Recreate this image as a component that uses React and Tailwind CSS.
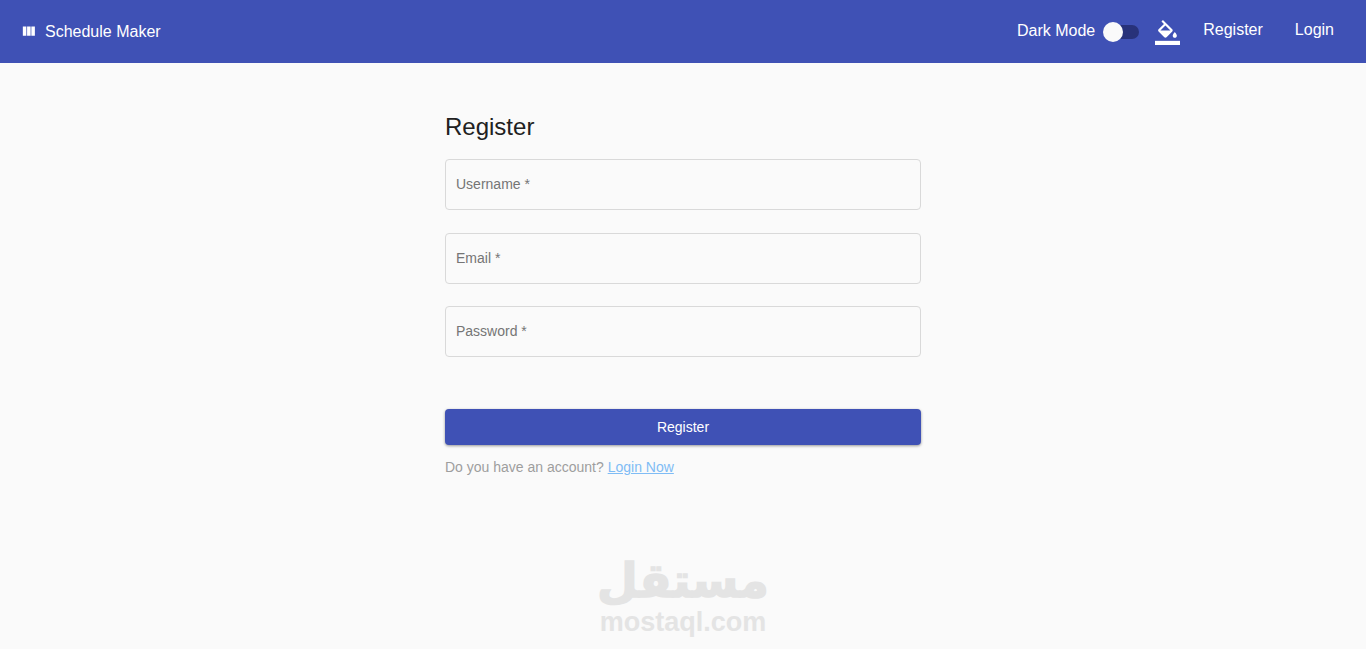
function Field({ label }) {
  return (
    <label className="flex h-[51px] w-full items-center rounded-[4px] border border-[#d9d9d9] px-[10px] text-[14px] text-[#757575]">
      {label} *
    </label>
  );
}

export default function App() {
  return (
    <div className="relative h-[649px] overflow-hidden bg-[#fafafa] font-['Liberation_Sans',Arial,sans-serif]">
      <header className="flex h-[63px] items-center justify-between bg-[#3f51b5] pl-[19px] pr-[32px] text-[16px] text-white">
        <div className="flex items-center gap-[8px]">
          <svg width="17" height="17" viewBox="0 0 24 24" fill="currentColor" className="ml-[1px]">
            <path d="M10 18h5V5h-5v13zm-6 0h5V5H4v13zM16 5v13h5V5h-5z" />
          </svg>
          <span>Schedule Maker</span>
        </div>
        <div className="flex items-center">
          <span className="mb-[2px] mr-[10px]">Dark Mode</span>
          <div className="relative mr-[16px] h-[14px] w-[34px] rounded-full bg-[#28327a]">
            <span className="absolute left-[-2px] top-[-3px] size-[20px] rounded-full bg-[#fafafa]" />
          </div>
          <svg width="25" height="25" viewBox="0 0 24 24" fill="currentColor" className="mr-[23px] mt-[2px]">
            <path d="M16.56 8.94L7.62 0 6.21 1.41l2.38 2.38-5.15 5.15c-.59.59-.59 1.54 0 2.12l5.5 5.5c.29.29.68.44 1.06.44s.77-.15 1.06-.44l5.5-5.5c.59-.58.59-1.53 0-2.12zM5.21 10L10 5.21 14.79 10H5.21zM19 11.5s-2 2.17-2 3.5c0 1.1.9 2 2 2s2-.9 2-2c0-1.33-2-3.5-2-3.5z" />
            <path d="M0 20h24v4H0z" />
          </svg>
          <a className="mb-[4px] mr-[32px]">Register</a>
          <a className="mb-[4px]">Login</a>
        </div>
      </header>

      <main className="mx-auto flex w-[476px] flex-col pt-[50px]">
        <h1 className="text-[24px] leading-[28px] text-[#212121]">Register</h1>
        <div className="mt-[18px] flex flex-col gap-[22.5px]">
          <Field label="Username" />
          <Field label="Email" />
          <Field label="Password" />
        </div>
        <button className="mt-[52px] h-[36px] rounded-[4px] bg-[#3f51b5] text-[14px] font-medium text-white shadow-[0_1px_3px_rgba(0,0,0,0.4)]">
          Register
        </button>
        <p className="mt-[14px] text-[14px] leading-[16px] text-[#9e9e9e]">
          Do you have an account?{" "}
          <a className="text-[#7fbcf5] underline">Login Now</a>
        </p>
      </main>

      <div className="absolute left-[583px] top-[552px] flex w-[200px] flex-col items-center text-[#e4e4e4]">
        <span className="font-['DejaVu_Sans',sans-serif] text-[47px] font-bold leading-[58px] [-webkit-text-stroke:1.5px_#e4e4e4]" dir="rtl">مستقل</span>
        <span className="mt-[-3px] text-[27px] font-bold leading-[30px]">mostaql.com</span>
      </div>
    </div>
  );
}
